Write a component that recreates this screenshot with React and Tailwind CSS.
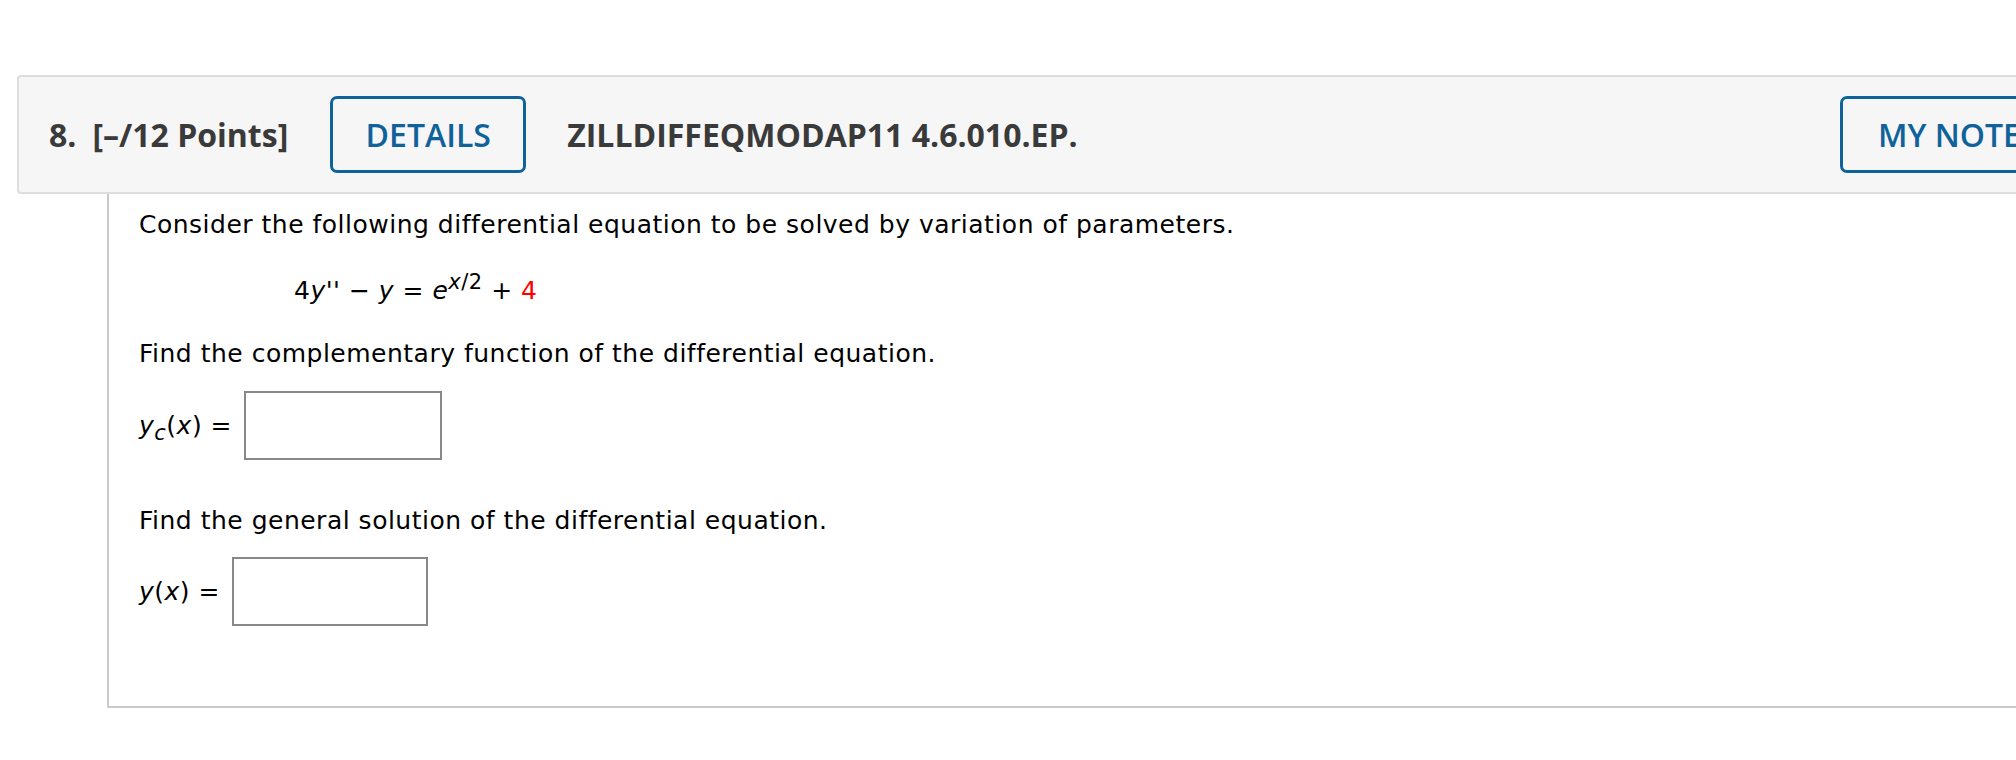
import React from "react";

const bodyFont = { fontFamily: '"DejaVu Sans", Verdana, sans-serif' };

function AnswerBox({ width }) {
  return <div className={`${width} h-[69px] border-2 border-[#888888] bg-white`}></div>;
}

export default function App() {
  return (
    <div className="w-full h-[760px] bg-white overflow-hidden pt-[75px]">
      <div
        className="ml-[17px] w-[2100px] h-[119px] bg-[#f6f6f6] border-2 border-[#dedede] rounded-[4px] flex items-center text-[#3a3a3a] font-bold text-[32px]"
        style={{ fontFamily: '"Open Sans", sans-serif' }}
      >
        <span className="ml-[30px]">8.</span>
        <span className="ml-[16px]">[–/12 Points]</span>
        <button className="ml-[42px] w-[196px] h-[77px] border-[3px] border-[#10629a] rounded-[7px] text-[#10629a] font-semibold">
          DETAILS
        </button>
        <span className="ml-[41px]">ZILLDIFFEQMODAP11 4.6.010.EP.</span>
        <button className="ml-auto mr-[45px] w-[230px] h-[77px] border-[3px] border-[#10629a] rounded-[7px] text-[#10629a] font-semibold text-left pl-[35px]">
          MY NOTES
        </button>
      </div>

      <div
        className="ml-[107px] h-[514px] border-l-2 border-b-2 border-[#cacaca] pl-[30px] pt-[16px] text-[25px] leading-[30px] tracking-[0.5px] text-black"
        style={bodyFont}
      >
        <p>Consider the following differential equation to be solved by variation of parameters.</p>

        <p className="mt-[36px] ml-[155px]">
          4<i>y</i>'' − <i>y</i> = <i>e</i>
          <sup className="text-[21px] relative top-[-10px]">
            <i>x</i>/2
          </sup>{" "}
          + <span className="text-[#ff0000]">4</span>
        </p>

        <p className="mt-[33px]">Find the complementary function of the differential equation.</p>

        <div className="mt-[22px] flex items-center gap-[12px]">
          <span>
            <i>y</i>
            <sub className="text-[21px] relative top-[6px]">
              <i>c</i>
            </sub>
            (<i>x</i>) =
          </span>
          <AnswerBox width="w-[198px]" />
        </div>

        <p className="mt-[46px]">Find the general solution of the differential equation.</p>

        <div className="mt-[21px] flex items-center gap-[12px]">
          <span>
            <i>y</i>(<i>x</i>) =
          </span>
          <AnswerBox width="w-[196px]" />
        </div>
      </div>
    </div>
  );
}
